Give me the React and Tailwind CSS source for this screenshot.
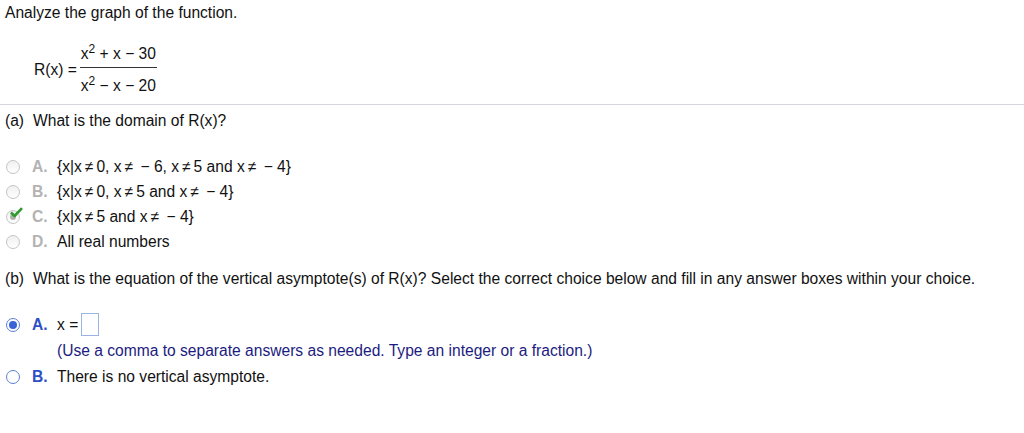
function Neq() {
  return <span className="px-[3px]">≠</span>
}

export default function App() {
  const greyOptions = [
    { letter: 'A.', text: <>{'{x|x'}<Neq />0, x<Neq /> − 6, x<Neq />5 and x<Neq /> − 4{'}'}</> },
    { letter: 'B.', text: <>{'{x|x'}<Neq />0, x<Neq />5 and x<Neq /> − 4{'}'}</> },
    { letter: 'C.', text: <>{'{x|x'}<Neq />5 and x<Neq /> − 4{'}'}</>, checked: true },
    { letter: 'D.', text: 'All real numbers' },
  ]

  return (
    <div className="w-[1024px] h-[433px] bg-white text-[15.6px] leading-[18px] text-[#111] font-['Liberation_Sans',Arial,sans-serif] overflow-hidden">
      <div className="h-[22px] pl-[5px] pt-[4px]">Analyze the graph of the function.</div>

      {/* fraction */}
      <div className="flex items-center ml-[34px] pt-[22px]">
        <span className="mr-[3px]">R(x) =</span>
        <div className="flex flex-col items-center w-[77px]">
          <div className="h-[20px] leading-[20px] pt-[1px] box-content -mt-[1px]">
            x<span className="relative -top-[6px] text-[12px] leading-none">2</span> + x − 30
          </div>
          <div className="w-full mt-[3px] border-t border-[#333]" />
          <div className="h-[20px] leading-[20px] pt-[8px] box-content">
            x<span className="relative -top-[6px] text-[12px] leading-none">2</span> − x − 20
          </div>
        </div>
      </div>

      <div className="mt-[8px] border-t border-[#d6d6de]" />

      <div className="pl-[5px] mt-[7px] flex">
        <span className="w-[28px]">(a)</span>
        <span>What is the domain of R(x)?</span>
      </div>

      <div className="mt-[24px]">
        {greyOptions.map((o, i) => (
          <div key={i} className="h-[25px] flex items-center">
            <div className="relative ml-[6px] w-[14px] h-[14px]">
              <div className="w-[14px] h-[14px] rounded-full border border-[#c4c4c4] bg-gradient-to-b from-[#f0f0f0] to-white flex items-center justify-center">
                {o.checked && <div className="w-[6px] h-[6px] rounded-full bg-[#b0b0b0]" />}
              </div>
              {o.checked && (
                <svg className="absolute left-[4px] -top-[3px]" width="13" height="11" viewBox="0 0 13 11">
                  <path d="M1 5.5 L4.5 9 L12 1.2" fill="none" stroke="#2f9a2f" strokeWidth="2.6" strokeLinejoin="round" />
                </svg>
              )}
            </div>
            <span className="ml-[12px] w-[25px] font-bold text-[#b3b3b3]">{o.letter}</span>
            <span>{o.text}</span>
          </div>
        ))}
      </div>

      <div className="pl-[5px] mt-[16px] flex">
        <span className="w-[28px]">(b)</span>
        <span>What is the equation of the vertical asymptote(s) of R(x)? Select the correct choice below and fill in any answer boxes within your choice.</span>
      </div>

      <div className="mt-[24px]">
        <div className="h-[25px] flex items-center">
          <div className="ml-[6px] w-[14px] h-[14px] rounded-full border border-[#5b7fd6] bg-white flex items-center justify-center">
            <div className="w-[8px] h-[8px] rounded-full bg-[#3a63d8]" />
          </div>
          <span className="ml-[12px] w-[25px] font-bold text-[#2f4fc4]">A.</span>
          <span>x =</span>
          <span className="ml-[3px] w-[18px] h-[23px] border border-[#9ab4e4] bg-white" />
        </div>
        <div className="h-[27px] flex items-center pl-[57px] text-[#1c1c80]">
          (Use a comma to separate answers as needed. Type an integer or a fraction.)
        </div>
        <div className="h-[25px] flex items-center">
          <div className="ml-[6px] w-[14px] h-[14px] rounded-full border-[1.5px] border-[#5b7fd6] bg-white" />
          <span className="ml-[12px] w-[25px] font-bold text-[#2f4fc4]">B.</span>
          <span>There is no vertical asymptote.</span>
        </div>
      </div>
    </div>
  )
}
